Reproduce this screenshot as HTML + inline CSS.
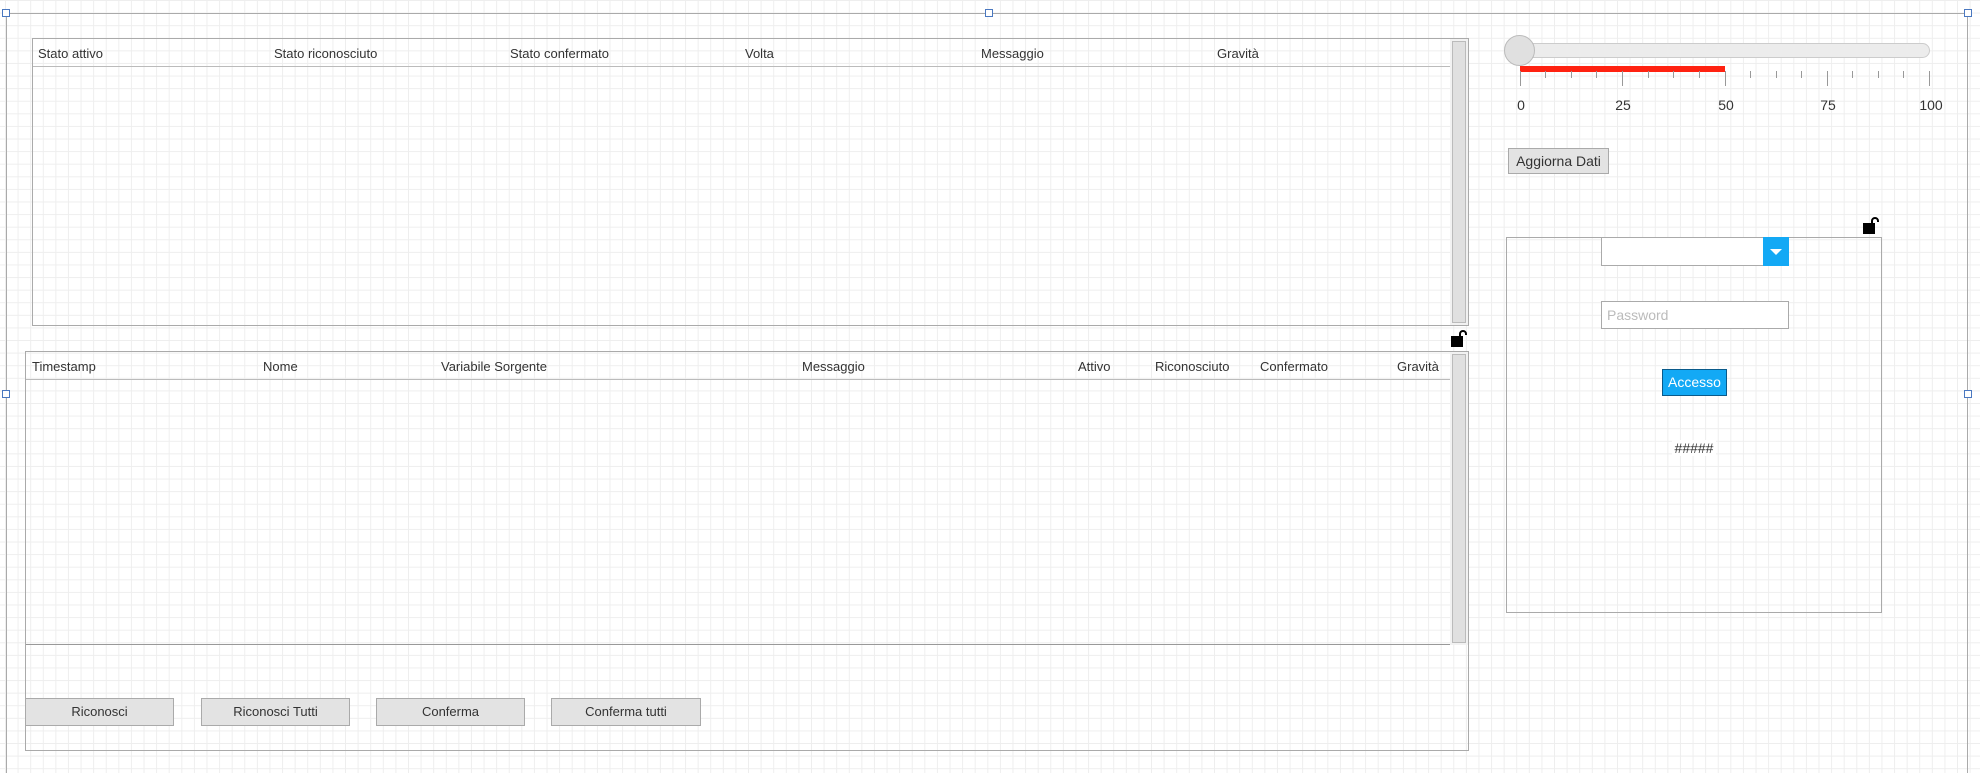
<!DOCTYPE html>
<html><head><meta charset="utf-8"><style>
*{box-sizing:border-box;margin:0;padding:0}
body{width:1980px;height:758px;overflow:hidden;position:relative;font-family:"Liberation Sans",sans-serif;font-size:13px;color:#333;
background-color:#fff;
background-image:linear-gradient(#eeeeee 1px,transparent 1px),linear-gradient(90deg,#eeeeee 1px,transparent 1px);
background-size:12.6px 12.6px;background-position:5px 0}
.a{position:absolute}
.box{position:absolute;border:1px solid #aaa}
.h{position:absolute;white-space:nowrap}
.sb{position:absolute;background:#e0e0e0;border:1px solid #bbb;box-shadow:0 0 0 2px #f2f2f2}
.btn{position:absolute;background:#e3e3e3;border:1px solid #aaa;text-align:center;line-height:26px}
.hd{position:absolute;width:8px;height:8px;border:1px solid #4a78c0;background:#fff}
.tick{position:absolute;width:1px;background:#999}
.lbl{position:absolute;font-size:14px;transform:translateX(-50%)}
</style></head><body>
<div class="a" style="left:6px;top:13px;width:1962px;height:760px;border:1px solid #aaa;border-bottom:none"></div>
<div class="hd" style="left:2px;top:9px"></div><div class="hd" style="left:985px;top:9px"></div><div class="hd" style="left:1964px;top:9px"></div>
<div class="hd" style="left:2px;top:390px"></div><div class="hd" style="left:1964px;top:390px"></div>

<div class="box" style="left:32px;top:38px;width:1437px;height:288px"></div>
<div class="a" style="left:33px;top:66px;width:1418px;height:1px;background:#bbb"></div>
<div class="h" style="left:38px;top:46px">Stato attivo</div>
<div class="h" style="left:274px;top:46px">Stato riconosciuto</div>
<div class="h" style="left:510px;top:46px">Stato confermato</div>
<div class="h" style="left:745px;top:46px">Volta</div>
<div class="h" style="left:981px;top:46px">Messaggio</div>
<div class="h" style="left:1217px;top:46px">Gravità</div>
<div class="sb" style="left:1452px;top:41px;width:14px;height:282px"></div>

<svg class="a" style="left:1450px;top:330px" width="18" height="18" viewBox="0 0 18 18"><rect x="1" y="6" width="12" height="11" fill="#000"/><path d="M10 7V4a3 3 0 0 1 6 0v1" fill="none" stroke="#000" stroke-width="2"/></svg>

<div class="box" style="left:25px;top:351px;width:1444px;height:400px"></div>
<div class="a" style="left:26px;top:379px;width:1425px;height:1px;background:#bbb"></div>
<div class="a" style="left:26px;top:644px;width:1442px;height:1px;background:#999"></div>
<div class="h" style="left:32px;top:359px">Timestamp</div>
<div class="h" style="left:263px;top:359px">Nome</div>
<div class="h" style="left:441px;top:359px">Variabile Sorgente</div>
<div class="h" style="left:802px;top:359px">Messaggio</div>
<div class="h" style="left:1078px;top:359px">Attivo</div>
<div class="h" style="left:1155px;top:359px">Riconosciuto</div>
<div class="h" style="left:1260px;top:359px">Confermato</div>
<div class="h" style="left:1397px;top:359px">Gravità</div>
<div class="sb" style="left:1452px;top:354px;width:14px;height:289px"></div>

<div class="btn" style="left:25px;top:698px;width:149px;height:28px">Riconosci</div>
<div class="btn" style="left:201px;top:698px;width:149px;height:28px">Riconosci Tutti</div>
<div class="btn" style="left:376px;top:698px;width:149px;height:28px">Conferma</div>
<div class="btn" style="left:551px;top:698px;width:150px;height:28px">Conferma tutti</div>

<div class="a" style="left:1506px;top:43px;width:424px;height:15px;border-radius:8px;background:#ececec;border:1px solid #ccc"></div>
<div class="a" style="left:1504px;top:35px;width:31px;height:31px;border-radius:50%;background:#e0e0e0;border:1px solid #bbb"></div>
<div class="a" style="left:1520px;top:66px;width:205px;height:6px;background:#f21"></div>
<div class="tick" style="left:1520px;top:71px;height:15px"></div>
<div class="tick" style="left:1545px;top:71px;height:7px"></div>
<div class="tick" style="left:1571px;top:71px;height:7px"></div>
<div class="tick" style="left:1596px;top:71px;height:7px"></div>
<div class="tick" style="left:1622px;top:71px;height:15px"></div>
<div class="tick" style="left:1648px;top:71px;height:7px"></div>
<div class="tick" style="left:1673px;top:71px;height:7px"></div>
<div class="tick" style="left:1699px;top:71px;height:7px"></div>
<div class="tick" style="left:1725px;top:71px;height:15px"></div>
<div class="tick" style="left:1750px;top:71px;height:7px"></div>
<div class="tick" style="left:1776px;top:71px;height:7px"></div>
<div class="tick" style="left:1801px;top:71px;height:7px"></div>
<div class="tick" style="left:1827px;top:71px;height:15px"></div>
<div class="tick" style="left:1852px;top:71px;height:7px"></div>
<div class="tick" style="left:1878px;top:71px;height:7px"></div>
<div class="tick" style="left:1903px;top:71px;height:7px"></div>
<div class="tick" style="left:1929px;top:71px;height:15px"></div>
<div class="lbl" style="left:1521px;top:97px">0</div>
<div class="lbl" style="left:1623px;top:97px">25</div>
<div class="lbl" style="left:1726px;top:97px">50</div>
<div class="lbl" style="left:1828px;top:97px">75</div>
<div class="lbl" style="left:1931px;top:97px">100</div>

<div class="btn" style="left:1508px;top:148px;width:101px;height:26px;line-height:24px;font-size:14px">Aggiorna Dati</div>

<svg class="a" style="left:1862px;top:217px" width="18" height="18" viewBox="0 0 18 18"><rect x="1" y="6" width="12" height="11" fill="#000"/><path d="M10 7V4a3 3 0 0 1 6 0v1" fill="none" stroke="#000" stroke-width="2"/></svg>
<div class="box" style="left:1506px;top:237px;width:376px;height:376px"></div>
<div class="box" style="left:1601px;top:237px;width:188px;height:29px;background:#fff"></div>
<div class="a" style="left:1763px;top:237px;width:26px;height:29px;background:#13a9f5"></div>
<div class="a" style="left:1770px;top:249px;width:0;height:0;border-left:6px solid transparent;border-right:6px solid transparent;border-top:6px solid #fff"></div>
<div class="box" style="left:1601px;top:301px;width:188px;height:28px;background:#fff;color:#bbb;padding:5px 5px;font-size:14px">Password</div>
<div class="a" style="left:1662px;top:369px;width:65px;height:27px;background:#13a9f5;border:1px solid #0a5a8a;color:#fff;text-align:center;line-height:25px;font-size:14px">Accesso</div>
<div class="h" style="left:1672px;top:440px;width:44px;text-align:center;background:#fff;font-size:14px">#####</div>
</body></html>
